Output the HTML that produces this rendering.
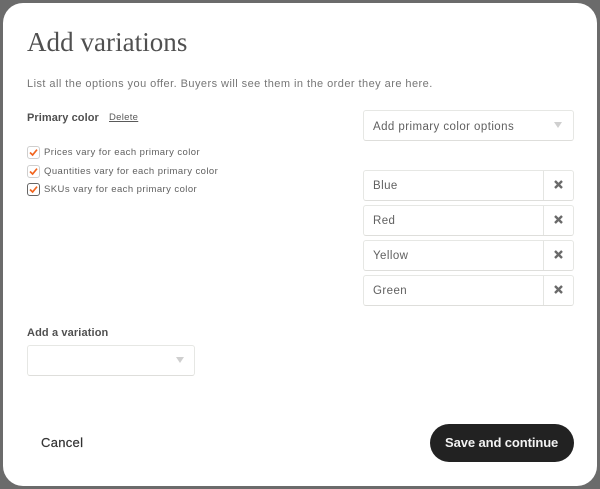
<!DOCTYPE html>
<html>
<head>
<meta charset="utf-8">
<style>
html,body{margin:0;padding:0;width:600px;height:489px;overflow:hidden;background:#6b6b6b;font-family:"Liberation Sans",sans-serif}
.modal{position:absolute;left:3px;top:3px;width:594px;height:483px;background:#fff;border-radius:20px}
.t{position:absolute;white-space:nowrap;line-height:16px}
.box{position:absolute;box-sizing:border-box;background:#fff;border:1px solid #e6e7e4;border-bottom-color:#dededb;border-radius:3px}
.row{left:363px;width:211px;height:31px}
.row i{position:absolute;left:179px;top:0;bottom:0;width:1px;background:#e4e5e2}
.row svg{position:absolute;left:189px;top:8px}
.row span{position:absolute;left:9px;top:7px;font-size:11.5px;line-height:16px;color:#606060;letter-spacing:.43px}
.arrow{position:absolute;width:0;height:0;border-left:4.5px solid transparent;border-right:4.5px solid transparent;border-top:6px solid #cfcfcf}
.cb{position:absolute;left:27px;box-sizing:border-box;width:13px;height:13px;border:1px solid #cfcfcf;border-radius:3px;background:#fff}
.cb svg{position:absolute;left:0;top:0}
.lab{left:44px;font-size:9.5px;color:#606060;letter-spacing:.43px}
</style>
</head>
<body>
<div class="modal"></div>
<div class="t" style="left:27px;top:26px;line-height:32px;font-family:'Liberation Serif',serif;font-size:27px;color:#505050;letter-spacing:.05px">Add variations</div>
<div class="t" style="left:27px;top:76px;font-size:11px;color:#767676;letter-spacing:.45px">List all the options you offer. Buyers will see them in the order they are here.</div>

<div class="t" style="left:27px;top:110px;font-size:11px;font-weight:bold;color:#505050;letter-spacing:.07px">Primary color</div>
<div class="t" style="left:109px;top:110px;font-size:9.5px;color:#5a5a5a;text-decoration:underline;letter-spacing:.3px">Delete</div>

<div class="cb" style="top:146px"><svg width="11" height="11" viewBox="0 0 11 11"><path d="M2 5.5L4.6 8L9 2.6" fill="none" stroke="#f1641e" stroke-width="1.7"/></svg></div>
<div class="t lab" style="top:145px">Prices vary for each primary color</div>
<div class="cb" style="top:165px"><svg width="11" height="11" viewBox="0 0 11 11"><path d="M2 5.5L4.6 8L9 2.6" fill="none" stroke="#f1641e" stroke-width="1.7"/></svg></div>
<div class="t lab" style="top:164px">Quantities vary for each primary color</div>
<div class="cb" style="top:183px;border-color:#666"><svg width="11" height="11" viewBox="0 0 11 11"><path d="M2 5.5L4.6 8L9 2.6" fill="none" stroke="#f1641e" stroke-width="1.7"/></svg></div>
<div class="t lab" style="top:182px">SKUs vary for each primary color</div>

<div class="box" style="left:363px;top:110px;width:211px;height:31px">
  <span class="t" style="left:9px;top:8px;font-size:11.5px;color:#606060;letter-spacing:.43px">Add primary color options</span>
  <div class="arrow" style="left:190px;top:11px"></div>
</div>

<div class="box row" style="top:170px"><span>Blue</span><i></i><svg width="11" height="11" viewBox="0 0 11 11"><path d="M2 2L9 9M9 2L2 9" stroke="#6a6a6a" stroke-width="2.4"/></svg></div>
<div class="box row" style="top:205px"><span>Red</span><i></i><svg width="11" height="11" viewBox="0 0 11 11"><path d="M2 2L9 9M9 2L2 9" stroke="#6a6a6a" stroke-width="2.4"/></svg></div>
<div class="box row" style="top:240px"><span>Yellow</span><i></i><svg width="11" height="11" viewBox="0 0 11 11"><path d="M2 2L9 9M9 2L2 9" stroke="#6a6a6a" stroke-width="2.4"/></svg></div>
<div class="box row" style="top:275px"><span>Green</span><i></i><svg width="11" height="11" viewBox="0 0 11 11"><path d="M2 2L9 9M9 2L2 9" stroke="#6a6a6a" stroke-width="2.4"/></svg></div>

<div class="t" style="left:27px;top:325px;font-size:11px;font-weight:bold;color:#505050;letter-spacing:.13px">Add a variation</div>
<div class="box" style="left:27px;top:345px;width:168px;height:31px">
  <div class="arrow" style="left:148px;top:11px"></div>
</div>

<div class="t" style="left:41px;top:435px;font-size:13px;color:#333;letter-spacing:.3px;-webkit-text-stroke:.2px #333">Cancel</div>
<div style="position:absolute;left:430px;top:424px;width:144px;height:38px;border-radius:19px;background:#222"></div>
<div class="t" style="left:445px;top:435px;font-size:13px;font-weight:bold;color:#f2f2f2;letter-spacing:-.1px">Save and continue</div>
</body>
</html>
